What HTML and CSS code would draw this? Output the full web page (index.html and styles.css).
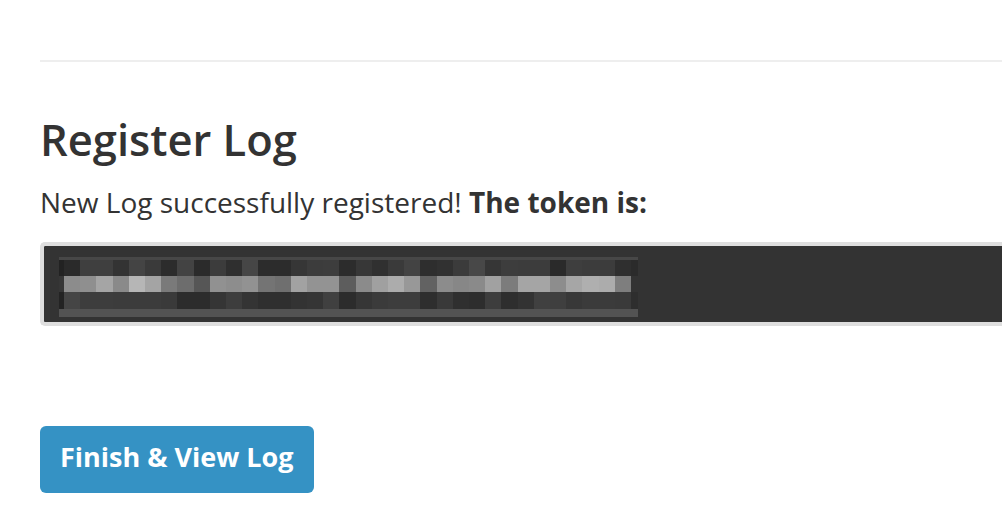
FILE: index.html
```html
<!DOCTYPE html>
<html lang="en">
<head>
<meta charset="utf-8">
<title>Register Log</title>
<link rel="stylesheet" href="styles.css">
</head>
<body>
<main class="page">
  <hr class="divider">
  <h1 class="title">Register Log</h1>
  <p class="lead">New Log successfully registered! <strong>The token is:</strong></p>
  <div class="token">
    <svg class="token-blur" width="579" height="60" viewBox="0 0 579 60" shape-rendering="crispEdges" aria-label="token (hidden)">
      <rect x="0" y="0" width="579" height="3" fill="#474747"/>
      <rect x="0" y="52" width="579" height="8" fill="#535353"/>
      <rect x="0" y="3" width="5" height="16.3" fill="#222222"/>
      <rect x="0" y="19.3" width="5" height="16" fill="#363636"/>
      <rect x="0" y="35.3" width="5" height="16.7" fill="#232323"/>
      <rect x="572" y="3" width="7" height="16.3" fill="#2b2b2b"/>
      <rect x="572" y="19.3" width="7" height="16" fill="#333333"/>
      <rect x="572" y="35.3" width="7" height="16.7" fill="#2e2e2e"/>
      <g transform="translate(5,3) scale(16.2,16.3)">
        <rect x="0" width="1.02" height="1" fill="#2a2a2a"/><rect x="1" width="1.02" height="1" fill="#3f3f3f"/><rect x="2" width="1.02" height="1" fill="#3f3f3f"/><rect x="3" width="1.02" height="1" fill="#333333"/><rect x="4" width="1.02" height="1" fill="#444444"/><rect x="5" width="1.02" height="1" fill="#3a3a3a"/><rect x="6" width="1.02" height="1" fill="#2c2c2c"/><rect x="7" width="1.02" height="1" fill="#434343"/><rect x="8" width="1.02" height="1" fill="#2b2b2b"/><rect x="9" width="1.02" height="1" fill="#3c3c3c"/><rect x="10" width="1.02" height="1" fill="#2f2f2f"/><rect x="11" width="1.02" height="1" fill="#464646"/><rect x="12" width="1.02" height="1" fill="#2c2c2c"/><rect x="13" width="1.02" height="1" fill="#2c2c2c"/><rect x="14" width="1.02" height="1" fill="#363636"/><rect x="15" width="1.02" height="1" fill="#3c3c3c"/><rect x="16" width="1.02" height="1" fill="#3d3d3d"/><rect x="17" width="1.02" height="1" fill="#2c2c2c"/><rect x="18" width="1.02" height="1" fill="#373737"/><rect x="19" width="1.02" height="1" fill="#303030"/><rect x="20" width="1.02" height="1" fill="#3a3a3a"/><rect x="21" width="1.02" height="1" fill="#434343"/><rect x="22" width="1.02" height="1" fill="#2e2e2e"/><rect x="23" width="1.02" height="1" fill="#313131"/><rect x="24" width="1.02" height="1" fill="#3b3b3b"/><rect x="25" width="1.02" height="1" fill="#484848"/><rect x="26" width="1.02" height="1" fill="#363636"/><rect x="27" width="1.02" height="1" fill="#3d3d3d"/><rect x="28" width="1.02" height="1" fill="#3c3c3c"/><rect x="29" width="1.02" height="1" fill="#3c3c3c"/><rect x="30" width="1.02" height="1" fill="#2a2a2a"/><rect x="31" width="1.02" height="1" fill="#3e3e3e"/><rect x="32" width="1.02" height="1" fill="#3c3c3c"/><rect x="33" width="1.02" height="1" fill="#3c3c3c"/><rect x="34" width="1" height="1" fill="#2f2f2f"/>
      </g>
      <g transform="translate(5,19.3) scale(16.2,16)">
        <rect x="0" width="1.02" height="1" fill="#8c8c8c"/><rect x="1" width="1.02" height="1" fill="#8f8f8f"/><rect x="2" width="1.02" height="1" fill="#a5a5a5"/><rect x="3" width="1.02" height="1" fill="#8a8a8a"/><rect x="4" width="1.02" height="1" fill="#b6b6b6"/><rect x="5" width="1.02" height="1" fill="#a4a4a4"/><rect x="6" width="1.02" height="1" fill="#7a7a7a"/><rect x="7" width="1.02" height="1" fill="#6d6d6d"/><rect x="8" width="1.02" height="1" fill="#565656"/><rect x="9" width="1.02" height="1" fill="#919191"/><rect x="10" width="1.02" height="1" fill="#8d8d8d"/><rect x="11" width="1.02" height="1" fill="#929292"/><rect x="12" width="1.02" height="1" fill="#747474"/><rect x="13" width="1.02" height="1" fill="#6f6f6f"/><rect x="14" width="1.02" height="1" fill="#a2a2a2"/><rect x="15" width="1.02" height="1" fill="#939393"/><rect x="16" width="1.02" height="1" fill="#939393"/><rect x="17" width="1.02" height="1" fill="#5d5d5d"/><rect x="18" width="1.02" height="1" fill="#8b8b8b"/><rect x="19" width="1.02" height="1" fill="#a0a0a0"/><rect x="20" width="1.02" height="1" fill="#acacac"/><rect x="21" width="1.02" height="1" fill="#989898"/><rect x="22" width="1.02" height="1" fill="#626262"/><rect x="23" width="1.02" height="1" fill="#8c8c8c"/><rect x="24" width="1.02" height="1" fill="#878787"/><rect x="25" width="1.02" height="1" fill="#8a8a8a"/><rect x="26" width="1.02" height="1" fill="#a1a1a1"/><rect x="27" width="1.02" height="1" fill="#7c7c7c"/><rect x="28" width="1.02" height="1" fill="#a5a5a5"/><rect x="29" width="1.02" height="1" fill="#a5a5a5"/><rect x="30" width="1.02" height="1" fill="#8d8d8d"/><rect x="31" width="1.02" height="1" fill="#a6a6a6"/><rect x="32" width="1.02" height="1" fill="#afafaf"/><rect x="33" width="1.02" height="1" fill="#acacac"/><rect x="34" width="1" height="1" fill="#7e7e7e"/>
      </g>
      <g transform="translate(5,35.3) scale(16.2,16.7)">
        <rect x="0" width="1.02" height="1" fill="#454545"/><rect x="1" width="1.02" height="1" fill="#3d3d3d"/><rect x="2" width="1.02" height="1" fill="#3d3d3d"/><rect x="3" width="1.02" height="1" fill="#3c3c3c"/><rect x="4" width="1.02" height="1" fill="#3c3c3c"/><rect x="5" width="1.02" height="1" fill="#3c3c3c"/><rect x="6" width="1.02" height="1" fill="#3a3a3a"/><rect x="7" width="1.02" height="1" fill="#2c2c2c"/><rect x="8" width="1.02" height="1" fill="#2c2c2c"/><rect x="9" width="1.02" height="1" fill="#353535"/><rect x="10" width="1.02" height="1" fill="#3d3d3d"/><rect x="11" width="1.02" height="1" fill="#343434"/><rect x="12" width="1.02" height="1" fill="#2f2f2f"/><rect x="13" width="1.02" height="1" fill="#2f2f2f"/><rect x="14" width="1.02" height="1" fill="#333333"/><rect x="15" width="1.02" height="1" fill="#353535"/><rect x="16" width="1.02" height="1" fill="#404040"/><rect x="17" width="1.02" height="1" fill="#2c2c2c"/><rect x="18" width="1.02" height="1" fill="#363636"/><rect x="19" width="1.02" height="1" fill="#3b3b3b"/><rect x="20" width="1.02" height="1" fill="#3d3d3d"/><rect x="21" width="1.02" height="1" fill="#3d3d3d"/><rect x="22" width="1.02" height="1" fill="#2e2e2e"/><rect x="23" width="1.02" height="1" fill="#393939"/><rect x="24" width="1.02" height="1" fill="#2f2f2f"/><rect x="25" width="1.02" height="1" fill="#2d2d2d"/><rect x="26" width="1.02" height="1" fill="#3d3d3d"/><rect x="27" width="1.02" height="1" fill="#2e2e2e"/><rect x="28" width="1.02" height="1" fill="#333333"/><rect x="29" width="1.02" height="1" fill="#404040"/><rect x="30" width="1.02" height="1" fill="#3f3f3f"/><rect x="31" width="1.02" height="1" fill="#383838"/><rect x="32" width="1.02" height="1" fill="#3b3b3b"/><rect x="33" width="1.02" height="1" fill="#3b3b3b"/><rect x="34" width="1" height="1" fill="#3a3a3a"/>
      </g>
    </svg>
  </div>
  <a class="btn-primary" href="#">Finish &amp; View Log</a>
</main>
</body>
</html>
```

FILE: styles.css
```css
html, body {
  margin: 0;
  padding: 0;
  background: #ffffff;
  overflow: hidden;
}

body {
  font-family: "Open Sans", "Noto Sans", "Liberation Sans", sans-serif;
  color: #333333;
}

.page {
  width: 1100px;
  padding: 60px 0 0 40px;
  box-sizing: content-box;
}

.divider {
  margin: 0;
  border: 0;
  height: 2px;
  background: #eeeeee;
}

.title {
  margin: 54px 0 0;
  font-size: 43.5px;
  line-height: 48px;
  font-weight: 600;
  color: #333333;
}

.lead {
  margin: 18px 0 0;
  font-size: 28px;
  line-height: 40px;
  font-weight: 400;
}

.lead strong {
  font-weight: 700;
}

.token {
  margin-top: 20px;
  height: 84px;
  box-sizing: border-box;
  border: 4px solid #dedede;
  border-right: 0;
  border-radius: 5px 0 0 5px;
  background: #333333;
  padding: 11px 0 0 15px;
}

.token-blur {
  display: block;
}

.btn-primary {
  display: inline-block;
  margin-top: 100px;
  padding: 12px 20px 18px;
  font-size: 27px;
  line-height: 37px;
  font-weight: 700;
  color: #ffffff;
  background: #3592c4;
  border-radius: 6px;
  text-decoration: none;
}
```
